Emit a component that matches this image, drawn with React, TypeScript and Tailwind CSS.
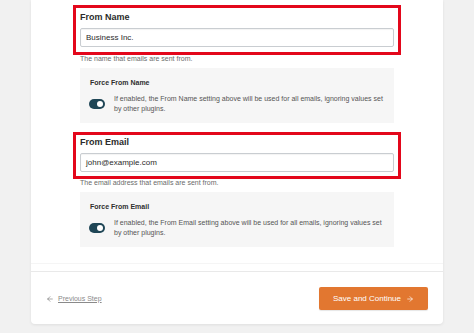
import { ArrowLeft, ArrowRight } from 'lucide-react'

const FONT = { fontFamily: '"Liberation Sans", Arial, sans-serif' }

type FieldProps = {
  label: string
  value: string
  help: string
  forceTitle: string
  forceText: string
  topPad: string
  bottomPad: string
}

function Toggle() {
  return (
    <span className="relative -ml-[1px] flex h-[10px] w-[16px] shrink-0 items-center rounded-full bg-[#1f4656]">
      <span className="absolute right-[2px] h-[6px] w-[6px] rounded-full bg-white" />
    </span>
  )
}

function EmailField({ label, value, help, forceTitle, forceText, topPad, bottomPad }: FieldProps) {
  return (
    <div>
      <div className={`-mx-[7px] border-[3px] border-[#e3071b] px-[4px] ${topPad} ${bottomPad}`}>
        <label className="block text-[9px] font-bold leading-[12px] text-[#2b2b2b]">{label}</label>
        <div className="mt-[5px] flex h-[19px] items-center rounded-[2px] border border-[#c9cdd1] bg-white px-[5px] text-[8px] text-[#2b2b2b] shadow-[inset_0_1px_1px_rgba(0,0,0,0.05)]">
          {value}
        </div>
      </div>
      <p className="text-[7px] leading-[8px] text-[#6b6b6b]">{help}</p>
      <div className="mt-[5px] bg-[#f6f6f6] px-[10px] pt-[10px] pb-[10px]">
        <p className="text-[7px] font-bold leading-[10px] text-[#2f2f2f]">{forceTitle}</p>
        <div className="mt-[6px] flex items-center gap-[9px]">
          <Toggle />
          <p className="text-[7px] leading-[9.5px] text-[#555]">{forceText}</p>
        </div>
      </div>
    </div>
  )
}

export default function App() {
  return (
    <div className="h-[333px] w-[474px] overflow-hidden bg-[#f1f1f1]" style={FONT}>
      <div className="ml-[31px] w-[412px] rounded-b-[4px] bg-white shadow-[0_1px_3px_rgba(0,0,0,0.08)]">
        <div className="border-b border-[#f5f5f5] px-[49px] pt-[5px] pb-[16px]">
          <EmailField
            label="From Name"
            value="Business Inc."
            help="The name that emails are sent from."
            forceTitle="Force From Name"
            forceText="If enabled, the From Name setting above will be used for all emails, ignoring values set by other plugins."
            topPad="pt-[3px]"
            bottomPad="pb-[5px]"
          />
          <div className="mt-[9px]">
            <EmailField
              label="From Email"
              value="john@example.com"
              help="The email address that emails are sent from."
              forceTitle="Force From Email"
              forceText="If enabled, the From Email setting above will be used for all emails, ignoring values set by other plugins."
              topPad="pt-[1px]"
              bottomPad="pb-[4px]"
            />
          </div>
        </div>
        <div className="mt-[7px] flex items-center justify-between border-t border-[#e9e9e9] px-[15px] pt-[15px] pb-[14px]">
          <a className="flex items-center gap-[4px] text-[7px] leading-[10px] text-[#8a8a8a]">
            <ArrowLeft size={8} strokeWidth={1.5} className="text-[#555]" />
            <span className="underline">Previous Step</span>
          </a>
          <button className="flex h-[23px] w-[109px] items-center justify-center gap-[5px] rounded-[2px] bg-[#e27730] text-[8px] font-medium text-white shadow-[0_1px_1px_rgba(0,0,0,0.1)]">
            Save and Continue
            <ArrowRight size={8} strokeWidth={2} />
          </button>
        </div>
      </div>
    </div>
  )
}
